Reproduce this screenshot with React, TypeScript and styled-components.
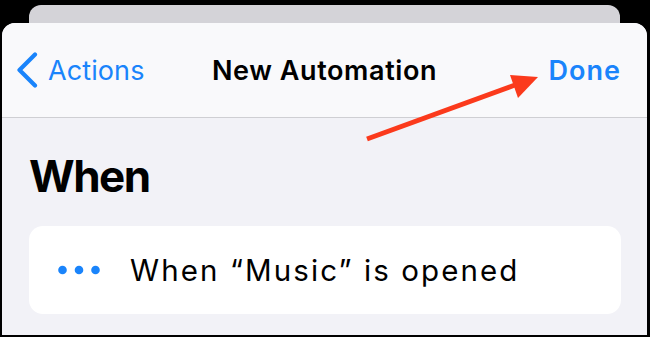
import React from "react";
import styled, { createGlobalStyle } from "styled-components";

const Global = createGlobalStyle`
  html, body { margin: 0; padding: 0; background: #000; }
  body { font-family: Inter, "Noto Sans", "Liberation Sans", sans-serif; -webkit-font-smoothing: antialiased; }
`;

const Screen = styled.div`
  position: relative;
  width: 650px;
  height: 337px;
  background: #000;
  display: flex;
  flex-direction: column;
  overflow: hidden;
`;

const BackSheet = styled.div`
  height: 18px;
  margin: 5px 30px 0 29px;
  background: #d4d3d8;
  border-radius: 12px 12px 0 0;
  flex: none;
`;

const Sheet = styled.div`
  flex: 1;
  margin: 0 3px 2px 2px;
  border-radius: 13px 13px 0 0;
  background: #f2f2f7;
  display: flex;
  flex-direction: column;
  overflow: hidden;
`;

const NavBar = styled.div`
  height: 94px;
  flex: none;
  background: #f9f9fb;
  border-bottom: 1px solid #cfcfd3;
  display: grid;
  grid-template-columns: 1fr auto 1fr;
  align-items: center;
  padding: 0 14px;
`;

const BackButton = styled.div`
  display: flex;
  align-items: center;
  gap: 10px;
  color: #1a84fb;
  font-size: 27px;
  letter-spacing: 0.1px;
  justify-self: start;
`;

const Title = styled.div`
  font-size: 27px;
  font-weight: 600;
  color: #000;
  letter-spacing: 0.6px;
`;

const DoneButton = styled.div`
  justify-self: end;
  padding-right: 12px;
  font-size: 27px;
  font-weight: 600;
  color: #1a84fb;
  letter-spacing: 1px;
`;

const Body = styled.div`
  padding: 32px 26px 0 27px;
  display: flex;
  flex-direction: column;
`;

const Heading = styled.h1`
  margin: 0;
  font-size: 44px;
  font-weight: 700;
  line-height: 52px;
  color: #000;
  letter-spacing: -1.5px;
`;

const TriggerRow = styled.div`
  margin-top: 24px;
  height: 88px;
  background: #fff;
  border-radius: 14px;
  display: flex;
  align-items: center;
  padding: 0 0 0 29px;
  gap: 29px;
`;

const TriggerText = styled.span`
  font-size: 29.5px;
  color: #000;
  letter-spacing: 2.1px;
`;

const Annotation = styled.svg`
  position: absolute;
  left: 0;
  top: 0;
  pointer-events: none;
`;

export default function App() {
  return (
    <>
      <Global />
      <Screen>
        <BackSheet />
        <Sheet>
          <NavBar>
            <BackButton>
              <svg width="22" height="36" viewBox="0 0 22 36">
                <polyline points="19,2.5 3.5,18 19,33.5" fill="none" stroke="#1a84fb" strokeWidth="4.2" strokeLinecap="round" strokeLinejoin="round" />
              </svg>
              <span>Actions</span>
            </BackButton>
            <Title>New Automation</Title>
            <DoneButton>Done</DoneButton>
          </NavBar>
          <Body>
            <Heading>When</Heading>
            <TriggerRow>
              <svg width="43" height="10" viewBox="0 0 43 10">
                <circle cx="4.5" cy="5" r="4.3" fill="#1a84fb" />
                <circle cx="21" cy="5" r="4.3" fill="#1a84fb" />
                <circle cx="37.5" cy="5" r="4.3" fill="#1a84fb" />
              </svg>
              <TriggerText>When “Music” is opened</TriggerText>
            </TriggerRow>
          </Body>
        </Sheet>
        <Annotation width="650" height="337" viewBox="0 0 650 337">
          <line x1="367" y1="139" x2="515" y2="85" stroke="#fb3a1c" strokeWidth="5" strokeLinecap="butt" />
          <polygon points="538,77 510,75 518,98" fill="#fb3a1c" />
        </Annotation>
      </Screen>
    </>
  );
}
